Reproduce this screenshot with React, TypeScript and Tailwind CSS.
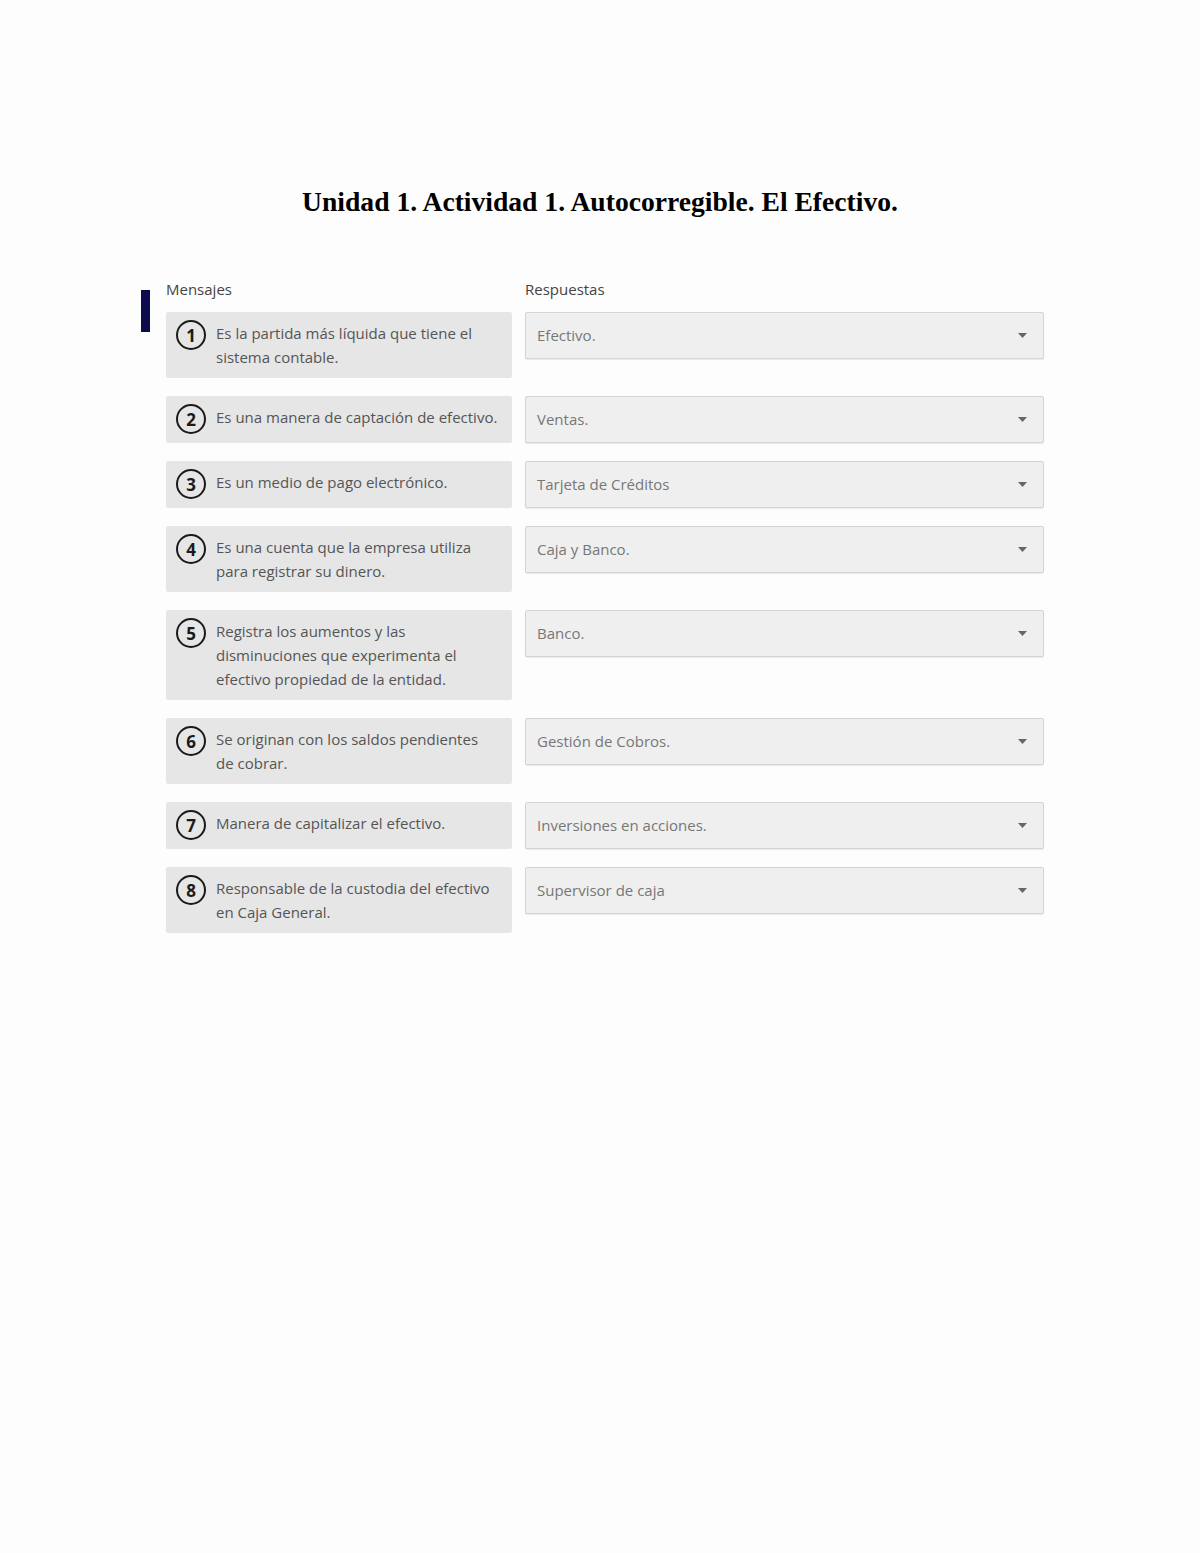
import React from "react";

const rows: { n: number; msg: string; ans: string }[] = [
  { n: 1, msg: "Es la partida más líquida que tiene el sistema contable.", ans: "Efectivo." },
  { n: 2, msg: "Es una manera de captación de efectivo.", ans: "Ventas." },
  { n: 3, msg: "Es un medio de pago electrónico.", ans: "Tarjeta de Créditos" },
  { n: 4, msg: "Es una cuenta que la empresa utiliza para registrar su dinero.", ans: "Caja y Banco." },
  { n: 5, msg: "Registra los aumentos y las disminuciones que experimenta el efectivo propiedad de la entidad.", ans: "Banco." },
  { n: 6, msg: "Se originan con los saldos pendientes de cobrar.", ans: "Gestión de Cobros." },
  { n: 7, msg: "Manera de capitalizar el efectivo.", ans: "Inversiones en acciones." },
  { n: 8, msg: "Responsable de la custodia del efectivo en Caja General.", ans: "Supervisor de caja" },
];

export default function App() {
  return (
    <div className="min-h-[1553px] w-[1200px] bg-[#fdfdfd]">
      <h1 className="pt-[185px] text-center font-['Liberation_Serif',serif] text-[27.6px] font-bold leading-[34px] text-black">
        Unidad 1. Actividad 1. Autocorregible. El Efectivo.
      </h1>
      <div className="mt-[60px] ml-[141px] flex gap-[16px] font-['Open_Sans',sans-serif]">
        <div className="mt-[11px] h-[42px] w-[9px] bg-[#0b0b4d]" />
        <div className="grid grid-cols-[346px_519px] gap-x-[13px] gap-y-[18px] items-start">
          <div className="-mb-[5px] text-[15px] leading-[20px] text-[#444]">Mensajes</div>
          <div className="-mb-[5px] text-[15px] leading-[20px] text-[#444]">Respuestas</div>
          {rows.map((r) => (
            <React.Fragment key={r.n}>
              <div className="flex min-h-[47px] items-start gap-[10px] rounded-[2px] bg-[#e6e6e6] pl-[10px] pr-[8px] pt-[9px] pb-[9px]">
                <div className="-mt-[1px] flex h-[30px] w-[30px] shrink-0 items-center justify-center rounded-full border-2 border-[#1a1a1a] text-[17px] font-bold leading-none text-[#1a1a1a]">
                  {r.n}
                </div>
                <div className="max-w-[282px] text-[15px] leading-[24px] text-[#555]">{r.msg}</div>
              </div>
              <div className="flex h-[47px] items-center justify-between rounded-[2px] border border-[#d4d4d4] bg-[#efefef] pl-[11px] pr-[16px] shadow-[0_1px_1px_rgba(0,0,0,0.08)]">
                <span className="text-[15px] text-[#777]">{r.ans}</span>
                <svg width="9" height="5" viewBox="0 0 9 5">
                  <path d="M0 0 L9 0 L4.5 5 Z" fill="#666" />
                </svg>
              </div>
            </React.Fragment>
          ))}
        </div>
      </div>
    </div>
  );
}
